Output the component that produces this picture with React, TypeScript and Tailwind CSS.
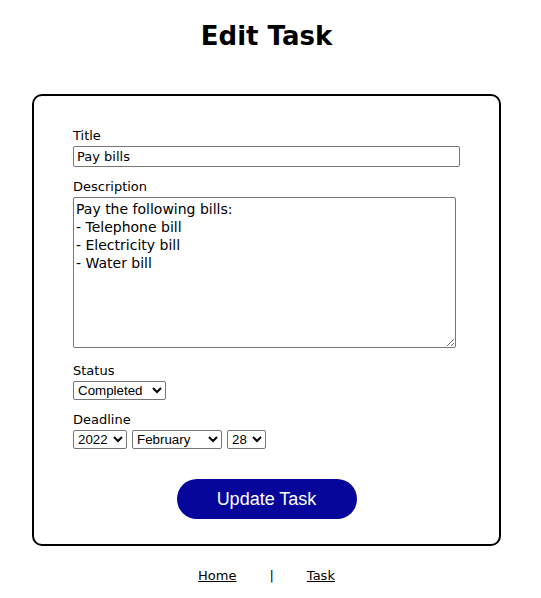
import React from "react";

export default function App() {
  return (
    <div className="w-[533px] bg-white text-black font-['DejaVu_Sans',sans-serif] pb-[20px]">
      <h1 className="pt-[21px] text-center text-[26px] leading-[30px] font-bold">Edit Task</h1>
      <div className="mx-auto mt-[43px] w-[469px] rounded-[10px] border-2 border-black pl-[39px] pt-[31px] pb-[25px]">
        <div className="text-[13px] leading-[18px]">Title</div>
        <input
          type="text"
          defaultValue="Pay bills"
          className="mt-[1px] block h-[21px] w-[387px] rounded-[2px] border border-[#767676] px-[3px] text-[13px] font-['DejaVu_Sans',sans-serif] outline-none"
        />
        <div className="mt-[11px] text-[13px] leading-[18px]">Description</div>
        <textarea
          defaultValue={"Pay the following bills:\n- Telephone bill\n- Electricity bill\n- Water bill"}
          className="mt-[1px] block h-[151px] w-[383px] rounded-[2px] border border-[#767676] px-[2px] pt-[2px] pb-[1px] text-[14px] leading-[18px] font-['DejaVu_Sans',sans-serif] outline-none"
        />
        <div className="mt-[14px] text-[13px] leading-[18px]">Status</div>
        <select
          defaultValue="Completed"
          className="mt-[1px] block h-[19px] w-[93px] rounded-[2px] border border-[#767676] text-[13.333px] font-['Liberation_Sans',Arial,sans-serif]"
        >
          <option>Pending</option>
          <option>Completed</option>
        </select>
        <div className="mt-[11px] text-[13px] leading-[18px]">Deadline</div>
        <div className="mt-[1px] flex gap-[5px]">
          <select
            defaultValue="2022"
            className="h-[19px] w-[54px] rounded-[2px] border border-[#767676] text-[13.333px] font-['Liberation_Sans',Arial,sans-serif]"
          >
            <option>2021</option>
            <option>2022</option>
            <option>2023</option>
          </select>
          <select
            defaultValue="February"
            className="h-[19px] w-[90px] rounded-[2px] border border-[#767676] text-[13.333px] font-['Liberation_Sans',Arial,sans-serif]"
          >
            <option>January</option>
            <option>February</option>
            <option>March</option>
          </select>
          <select
            defaultValue="28"
            className="h-[19px] w-[39px] rounded-[2px] border border-[#767676] text-[13.333px] font-['Liberation_Sans',Arial,sans-serif]"
          >
            <option>27</option>
            <option>28</option>
          </select>
        </div>
        <div className="mt-[30px] flex w-[387px] justify-center">
          <button className="h-[40px] w-[180px] rounded-full bg-[#06069b] text-[18px] text-white font-['Liberation_Sans',Arial,sans-serif]">
            Update Task
          </button>
        </div>
      </div>
      <div className="mt-[21px] flex justify-center gap-[33px] text-[13px] leading-[18px]">
        <a href="#" className="underline">Home</a>
        <span>|</span>
        <a href="#" className="underline">Task</a>
      </div>
    </div>
  );
}
